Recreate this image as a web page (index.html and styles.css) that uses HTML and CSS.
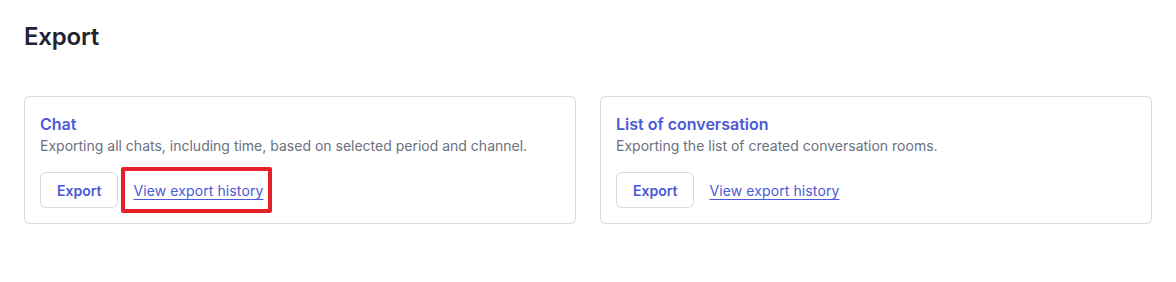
FILE: index.html
```html
<!DOCTYPE html>
<html lang="en">
<head>
	<meta charset="utf-8" />
	<title>Export</title>
	<link rel="stylesheet" href="styles.css">
</head>
<body>
	<div class="page">
		<h1 class="page-title">Export</h1>

		<div class="cards">
			<div class="card">
				<h2 class="card-title">Chat</h2>
				<p class="card-desc">Exporting all chats, including time, based on selected period and channel.</p>
				<div class="card-actions">
					<button class="btn">Export</button>
					<span class="link-wrap">
						<a class="history-link" href="#">View export history</a>
						<span class="highlight"></span>
					</span>
				</div>
			</div>

			<div class="card">
				<h2 class="card-title">List of conversation</h2>
				<p class="card-desc">Exporting the list of created conversation rooms.</p>
				<div class="card-actions">
					<button class="btn">Export</button>
					<span class="link-wrap">
						<a class="history-link" href="#">View export history</a>
					</span>
				</div>
			</div>
		</div>
	</div>
</body>
</html>
```

FILE: styles.css
```css
body{margin:0;padding:0;background:#fff;font-family:Inter,"Noto Sans",sans-serif;color:#1f2430;}
.page{padding:20px 24px;}
.page-title{margin:0;font-size:24px;line-height:34px;font-weight:600;color:#1f2430;letter-spacing:-0.2px;}
.cards{display:flex;gap:24px;margin-top:42px;}
.card{flex:1;border:1px solid #d6dae3;border-radius:6px;padding:15px 15px 15px;}
.card-title{margin:0;font-size:16px;line-height:24px;font-weight:600;color:#4a5ad6;}
.card-desc{margin:0;font-size:14px;line-height:20px;color:#6b7180;}
.card-actions{display:flex;align-items:center;margin-top:16px;}
.btn{height:36px;padding:0 16px;border:1px solid #d6dae3;border-radius:6px;background:#fff;font-family:inherit;font-size:14px;font-weight:600;color:#4a5ad6;cursor:pointer;}
.link-wrap{position:relative;margin-left:15px;}
.history-link{font-size:14px;line-height:20px;color:#4a5ad6;text-decoration:underline;text-underline-offset:3px;letter-spacing:0.1px;}
.highlight{position:absolute;left:-12px;right:-9px;top:-13px;bottom:-12px;border:4px solid #e8202a;border-radius:2px;}
```
